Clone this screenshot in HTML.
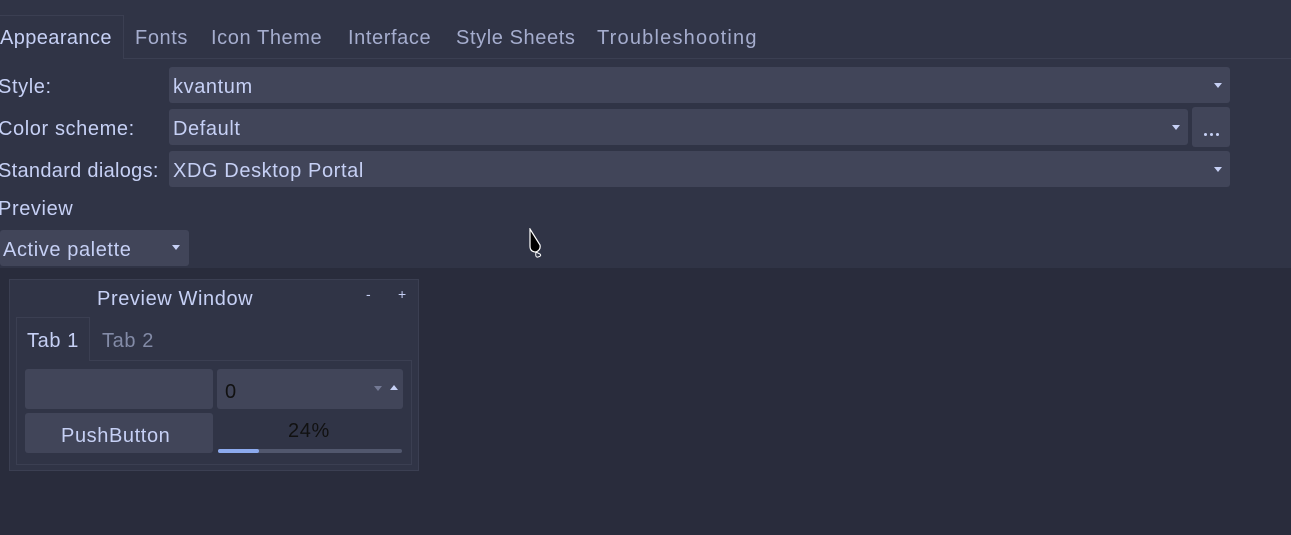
<!DOCTYPE html>
<html><head><meta charset="utf-8"><style>
*{margin:0;padding:0;box-sizing:border-box}
body{width:1291px;height:535px;background:#292c3c;position:relative;overflow:hidden;font-family:"Liberation Sans","DejaVu Sans",sans-serif;color:#c6d0f5;font-size:20px;letter-spacing:0.6px}
.a{position:absolute;white-space:nowrap}
.top{position:absolute;left:0;top:0;width:1291px;height:268px;background:#303446}
.cb{position:absolute;background:#414559;border-radius:3px}
.arr{position:absolute;width:0;height:0;border-left:4px solid transparent;border-right:4px solid transparent;border-top:5px solid #c6d0f5}
.tab{position:absolute;top:27px;color:#a5adce}
.dot{position:absolute;width:3px;height:3px;background:#c6d0f5;border-radius:50%}
</style></head><body>
<div class="top"></div>
<div class="a" style="left:0;top:58px;width:1291px;height:1px;background:#3b3f52"></div>
<div class="a" style="left:0;top:15px;width:124px;height:44px;border:1px solid #3b3f52;border-left:none;border-bottom:none;background:#303446"></div>
<div class="a" style="left:0;top:27px;color:#c6d0f5;letter-spacing:0.4px">Appearance</div>
<div class="tab" style="left:135px">Fonts</div>
<div class="tab" style="left:211px">Icon Theme</div>
<div class="tab" style="left:348px">Interface</div>
<div class="tab" style="left:456px">Style Sheets</div>
<div class="tab" style="left:597px;letter-spacing:1.2px">Troubleshooting</div>

<div class="a" style="left:-2px;top:76px">Style:</div>
<div class="cb" style="left:169px;top:67px;width:1061px;height:36px"></div>
<div class="a" style="left:173px;top:76px">kvantum</div>
<div class="arr" style="left:1214px;top:83px"></div>

<div class="a" style="left:-2px;top:118px">Color scheme:</div>
<div class="cb" style="left:169px;top:109px;width:1019px;height:36px"></div>
<div class="a" style="left:173px;top:118px">Default</div>
<div class="arr" style="left:1172px;top:125px"></div>
<div class="cb" style="left:1192px;top:107px;width:38px;height:40px"></div>
<div class="dot" style="left:1204px;top:133px"></div>
<div class="dot" style="left:1210px;top:133px"></div>
<div class="dot" style="left:1216px;top:133px"></div>

<div class="a" style="left:-2px;top:160px;letter-spacing:0.3px">Standard dialogs:</div>
<div class="cb" style="left:169px;top:151px;width:1061px;height:36px"></div>
<div class="a" style="left:173px;top:160px">XDG Desktop Portal</div>
<div class="arr" style="left:1214px;top:167px"></div>

<div class="a" style="left:-2px;top:198px">Preview</div>
<div class="cb" style="left:0;top:230px;width:189px;height:36px"></div>
<div class="a" style="left:3px;top:239px">Active palette</div>
<div class="arr" style="left:172px;top:245px"></div>

<svg class="a" style="left:528px;top:228px" width="20" height="34" viewBox="0 0 20 34"><path d="M2 1 L2 18 Q2 24 8 24 Q13 22 12 17 Z" fill="#000" stroke="#fff" stroke-width="1.2"/><path d="M8 24 Q7 30 10 29 Q14 28 12 26 Z" fill="none" stroke="#fff" stroke-width="1"/></svg>

<div class="a" style="left:9px;top:279px;width:410px;height:192px;background:#303446;border:1px solid #3b3f52"></div>
<div class="a" style="left:97px;top:288px">Preview Window</div>
<div class="a" style="left:366px;top:286px;font-size:14px">-</div>
<div class="a" style="left:398px;top:286px;font-size:14px">+</div>
<div class="a" style="left:16px;top:360px;width:396px;height:105px;border:1px solid #3b3f52"></div>
<div class="a" style="left:16px;top:317px;width:74px;height:44px;border:1px solid #3b3f52;border-bottom:none;background:#303446"></div>
<div class="a" style="left:27px;top:330px">Tab 1</div>
<div class="a" style="left:102px;top:330px;color:#838ba7">Tab 2</div>
<div class="cb" style="left:25px;top:369px;width:188px;height:40px"></div>
<div class="cb" style="left:217px;top:369px;width:186px;height:40px"></div>
<div class="a" style="left:225px;top:381px;color:#111">0</div>
<div class="arr" style="left:374px;top:386px;border-top-color:#737994"></div>
<div class="arr" style="left:390px;top:385px;border-top:none;border-bottom:5px solid #c6d0f5"></div>
<div class="cb" style="left:25px;top:413px;width:188px;height:40px"></div>
<div class="a" style="left:61px;top:425px">PushButton</div>
<div class="a" style="left:288px;top:420px;color:#111">24%</div>
<div class="a" style="left:218px;top:449px;width:184px;height:4px;background:#51576d;border-radius:2px"></div>
<div class="a" style="left:218px;top:449px;width:41px;height:4px;background:#8caaee;border-radius:2px"></div>
</body></html>
